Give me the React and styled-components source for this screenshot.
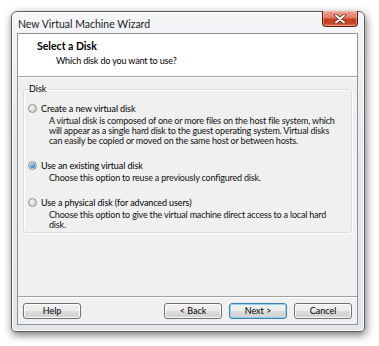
import React from "react";
import styled, { createGlobalStyle } from "styled-components";

const Global = createGlobalStyle`
  html, body { margin: 0; padding: 0; background: #ffffff; }
  body { width: 379px; height: 346px; overflow: hidden; font-family: Lato, "Noto Sans", sans-serif; }
`;

const Stage = styled.div`
  width: 379px;
  height: 346px;
  padding: 11px 14px 14px 11px;
  box-sizing: border-box;
`;

const Window = styled.div`
  width: 354px;
  height: 321px;
  box-sizing: border-box;
  display: flex;
  flex-direction: column;
  border: 1px solid #5a5f66;
  border-radius: 6px 6px 4px 4px;
  background: linear-gradient(#f4f6f8, #e6e9ed 40%, #e2e5e9);
  box-shadow: 1px 3px 9px rgba(0, 0, 0, 0.55), inset 0 0 0 1px rgba(255, 255, 255, 0.85);
`;

const TitleBar = styled.div`
  height: 21px;
  display: flex;
  align-items: flex-start;
  justify-content: space-between;
  padding: 0 6px 0 6px;
  flex-shrink: 0;
`;

const Title = styled.div`
  font-size: 10.5px;
  line-height: 11px;
  color: #1a1a1a;
  padding-top: 7px;
`;

const CloseButton = styled.div`
  width: 36px;
  height: 16px;
  margin-top: -1px;
  box-sizing: border-box;
  border: 1px solid #5b1d14;
  border-top: none;
  border-radius: 0 0 4px 4px;
  background: linear-gradient(#eea595 0%, #e07a63 45%, #c93a1f 55%, #c94628 85%, #e3805f 100%);
  box-shadow: inset 0 0 0 1px rgba(255, 200, 190, 0.45);
  display: flex;
  align-items: center;
  justify-content: center;
`;

const Client = styled.div`
  flex: 1;
  margin: 0 6px 6px 5px;
  border: 1px solid #8d949c;
  background: #f0f0f0;
  display: flex;
  flex-direction: column;
  color: #000;
`;

const Header = styled.div`
  height: 43px;
  background: #ffffff;
  border-bottom: 1px solid #a0a0a0;
  box-shadow: 0 1px 0 #ffffff;
  padding: 6px 0 0 19px;
  box-sizing: border-box;
  flex-shrink: 0;
`;

const HeaderTitle = styled.div`
  font-weight: bold;
  font-size: 10.5px;
  line-height: 13px;
`;

const HeaderSub = styled.div`
  font-size: 9px;
  line-height: 12px;
  letter-spacing: -0.15px;
  padding-left: 19px;
  margin-top: 2px;
`;

const Body = styled.div`
  flex: 1;
  padding: 12px 5px 0 5px;
`;

const GroupBox = styled.fieldset`
  margin: 0;
  padding: 7px 0 9px 3px;
  border: 1px solid #d5dfe5;
  border-radius: 3px;
  box-shadow: inset 1px 1px 0 #ffffff, 1px 1px 0 #ffffff;
  height: 150px;
  box-sizing: border-box;
  margin-top: -6px;
  display: flex;
  flex-direction: column;
  gap: 13px;
`;

const Legend = styled.legend`
  font-size: 9px;
  line-height: 12px;
  padding: 0 2px 0 0;
  margin-left: 2px;
`;

const Option = styled.div`
  display: flex;
  flex-direction: column;
`;

const RadioRow = styled.label`
  display: flex;
  align-items: center;
  height: 12px;
  font-size: 9px;
  letter-spacing: -0.1px;
  gap: 4px;
`;

const Radio = styled.span`
  width: 9px;
  height: 9px;
  margin-left: 1px;
  border-radius: 50%;
  box-sizing: border-box;
  border: 1px solid #8e8f8f;
  background: radial-gradient(circle at 35% 35%, #f4f4f4, #d4d4d4 70%, #c8c8c8);
  display: flex;
  align-items: center;
  justify-content: center;
  flex-shrink: 0;
  &::after {
    content: "";
    width: 5px;
    height: 5px;
    border-radius: 50%;
    display: ${(p) => (p.$checked ? "block" : "none")};
    background: radial-gradient(circle at 40% 35%, #a9e2ff, #2a8bd1 55%, #11507f);
  }
`;

const Desc = styled.div`
  padding-left: 22px;
  margin-top: 2px;
  display: flex;
  flex-direction: column;
`;

const DescLine = styled.span`
  font-size: 9px;
  line-height: 10px;
  letter-spacing: -0.19px;
  color: #111;
  white-space: nowrap;
`;

const Footer = styled.div`
  border-top: 1px solid #a0a0a0;
  box-shadow: inset 0 1px 0 #ffffff;
  height: 28px;
  box-sizing: border-box;
  padding: 6px 5px 0 5px;
  display: flex;
  gap: 7px;
  flex-shrink: 0;
`;

const Spacer = styled.div`
  flex: 1;
`;

const Button = styled.button`
  width: 58px;
  height: 16px;
  padding: 0;
  box-sizing: border-box;
  font-family: inherit;
  font-size: 9px;
  line-height: 12px;
  color: #000;
  border: 1px solid ${(p) => (p.$default ? "#3c7fb1" : "#707070")};
  border-radius: 3px;
  background: linear-gradient(#f2f2f2 0%, #ebebeb 50%, #dddddd 51%, #cfcfcf 100%);
  box-shadow: inset 0 0 0 1px ${(p) => (p.$default ? "#91d1f4" : "#fcfcfc")};
`;

const CloseIcon = () => (
  <svg width="12" height="10" viewBox="0 0 12 10">
    <path d="M2 1.5 L10 8.5 M10 1.5 L2 8.5" stroke="#5a2a22" strokeWidth="3.6" strokeLinecap="round" />
    <path d="M2 1.5 L10 8.5 M10 1.5 L2 8.5" stroke="#ffffff" strokeWidth="2" strokeLinecap="round" />
  </svg>
);

const options = [
  {
    label: "Create a new virtual disk",
    desc: [
      "A virtual disk is composed of one or more files on the host file system, which",
      "will appear as a single hard disk to the guest operating system. Virtual disks",
      "can easily be copied or moved on the same host or between hosts.",
    ],
    checked: false,
  },
  {
    label: "Use an existing virtual disk",
    desc: ["Choose this option to reuse a previously configured disk."],
    checked: true,
  },
  {
    label: "Use a physical disk (for advanced users)",
    desc: [
      "Choose this option to give the virtual machine direct access to a local hard",
      "disk.",
    ],
    checked: false,
  },
];

export default function App() {
  return (
    <>
      <Global />
      <Stage>
        <Window>
          <TitleBar>
            <Title>New Virtual Machine Wizard</Title>
            <CloseButton>
              <CloseIcon />
            </CloseButton>
          </TitleBar>
          <Client>
            <Header>
              <HeaderTitle>Select a Disk</HeaderTitle>
              <HeaderSub>Which disk do you want to use?</HeaderSub>
            </Header>
            <Body>
              <GroupBox>
                <Legend>Disk</Legend>
                {options.map((o) => (
                  <Option key={o.label}>
                    <RadioRow>
                      <Radio $checked={o.checked} />
                      {o.label}
                    </RadioRow>
                    <Desc>
                      {o.desc.map((line) => (
                        <DescLine key={line}>{line}</DescLine>
                      ))}
                    </Desc>
                  </Option>
                ))}
              </GroupBox>
            </Body>
            <Footer>
              <Button>Help</Button>
              <Spacer />
              <Button>&lt; Back</Button>
              <Button $default>Next &gt;</Button>
              <Button>Cancel</Button>
            </Footer>
          </Client>
        </Window>
      </Stage>
    </>
  );
}
